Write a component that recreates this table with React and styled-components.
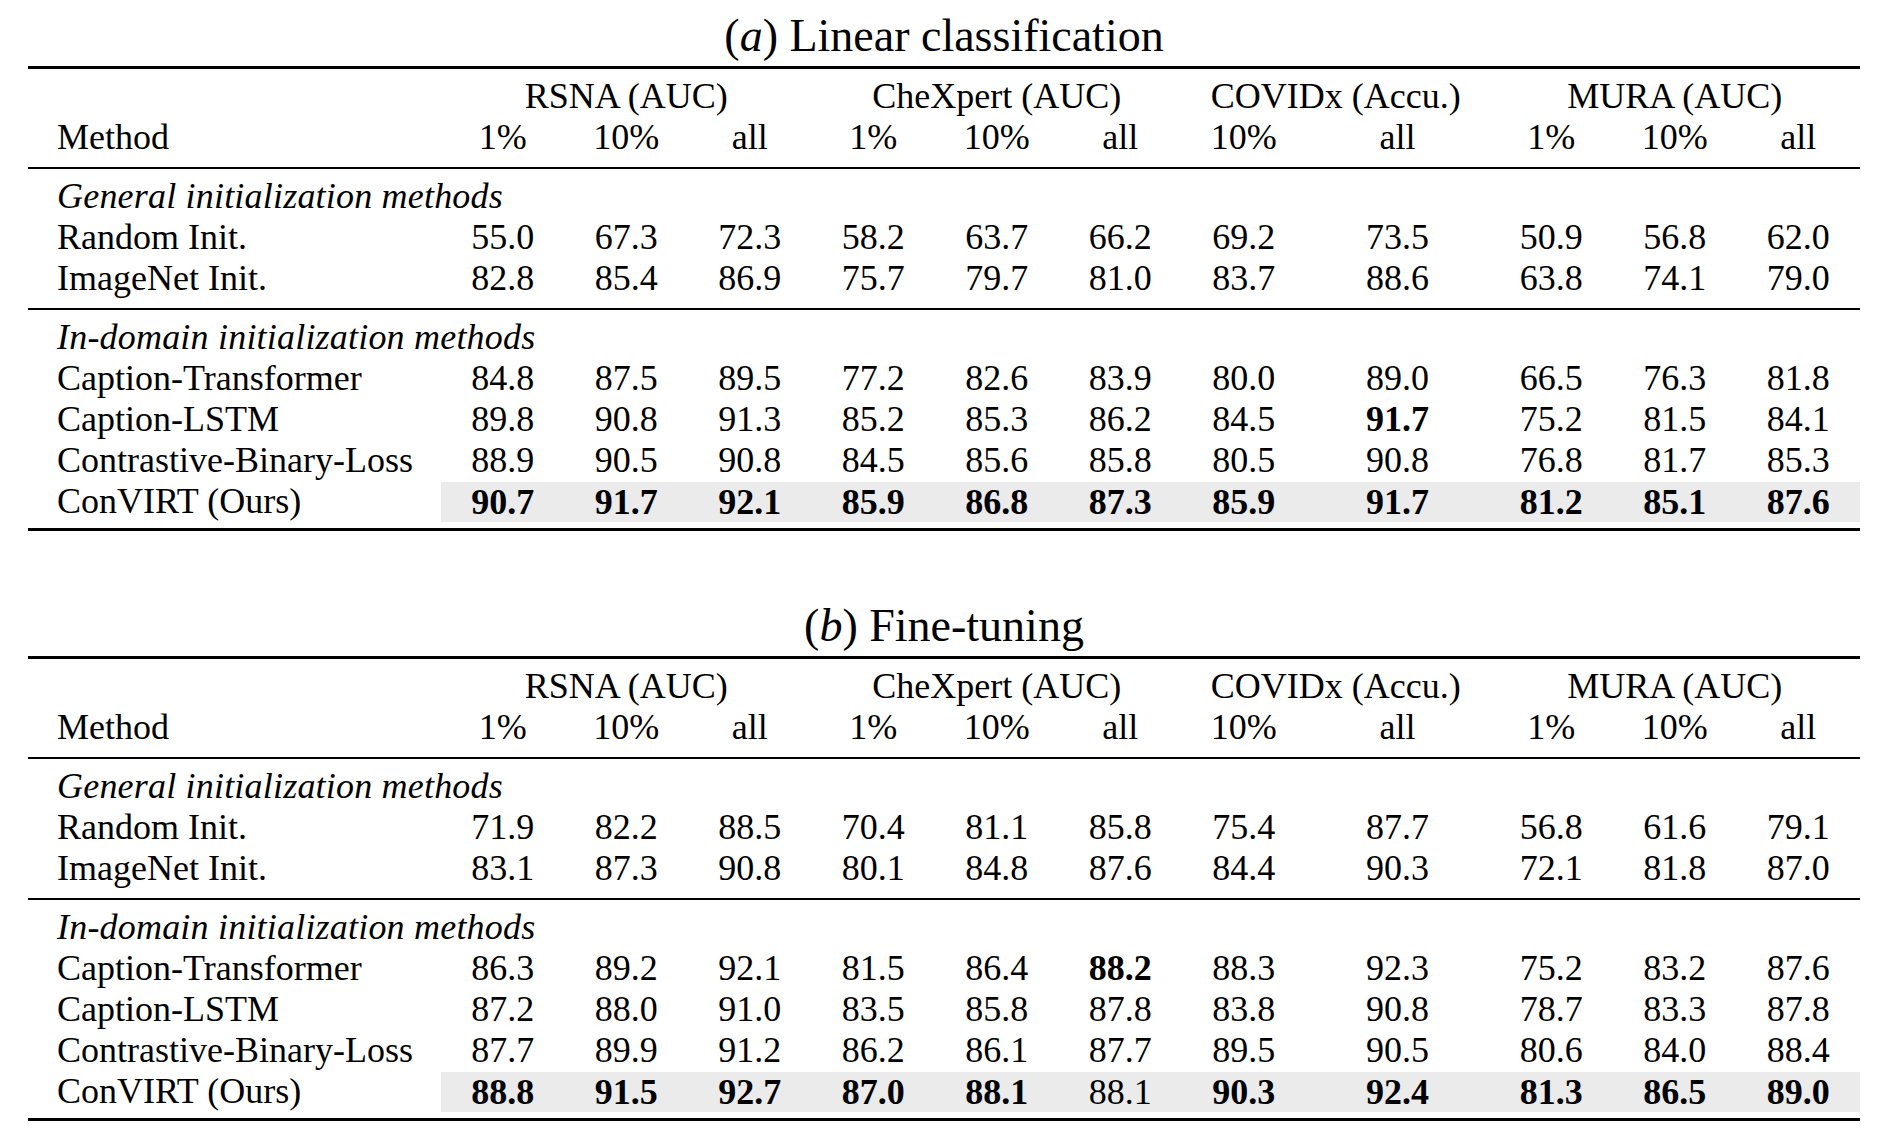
import React from "react";
import styled, { createGlobalStyle } from "styled-components";

const GlobalStyle = createGlobalStyle`
  html, body {
    margin: 0;
    padding: 0;
    background: #ffffff;
  }
  body {
    font-family: "Liberation Serif", "Times New Roman", serif;
    color: #000000;
  }
`;

const COLS = "413px repeat(7, 123.5px) 184px repeat(3, 123.5px)";

const Page = styled.div`
  width: 1832px;
  padding-left: 28px;
  display: flex;
  flex-direction: column;
`;

const Section = styled.section`
  display: flex;
  flex-direction: column;
  & + & {
    margin-top: 59.5px;
  }
`;

const Caption = styled.div`
  text-align: center;
  font-size: 46px;
  line-height: 52px;
  padding: 10px 0 3.5px;
  white-space: nowrap;
`;

const Var = styled.i`
  font-style: italic;
`;

const Table = styled.div`
  display: flex;
  flex-direction: column;
`;

const Rule = styled.div`
  height: ${(p) => p.$weight}px;
  background: #000000;
  margin-top: ${(p) => p.$above || 0}px;
  margin-bottom: ${(p) => p.$below || 0}px;
`;

const Row = styled.div`
  display: grid;
  grid-template-columns: ${COLS};
  height: 41px;
  font-size: 36px;
  line-height: 41px;
`;

const MethodCell = styled.div`
  padding-left: 29px;
  white-space: nowrap;
`;

const GroupLabel = styled.div`
  grid-column: 1 / -1;
  padding-left: 29px;
  font-style: italic;
  letter-spacing: 0.2px;
  white-space: nowrap;
`;

const HeadCell = styled.div`
  text-align: center;
  white-space: nowrap;
`;

const SpanHead = styled.div`
  grid-column: ${(p) => p.$start} / span ${(p) => p.$span};
  text-align: center;
  white-space: nowrap;
`;

const NumCell = styled.div`
  text-align: center;
  white-space: nowrap;
  font-weight: ${(p) => (p.$bold ? 700 : 400)};
  background: ${(p) => (p.$shade ? "#ebebeb" : "transparent")};
  margin: ${(p) => (p.$shade ? "1px 0 0" : "0")};
  line-height: ${(p) => (p.$shade ? "40px" : "41px")};
`;

const groups = [
  { label: "RSNA (AUC)", start: 2, span: 3 },
  { label: "CheXpert (AUC)", start: 5, span: 3 },
  { label: "COVIDx (Accu.)", start: 8, span: 2 },
  { label: "MURA (AUC)", start: 10, span: 3 },
];

const subHeads = ["1%", "10%", "all", "1%", "10%", "all", "10%", "all", "1%", "10%", "all"];

// value strings; a trailing "*" marks bold
const tables = [
  {
    letter: "a",
    title: "Linear classification",
    general: [
      ["Random Init.", "55.0 67.3 72.3 58.2 63.7 66.2 69.2 73.5 50.9 56.8 62.0"],
      ["ImageNet Init.", "82.8 85.4 86.9 75.7 79.7 81.0 83.7 88.6 63.8 74.1 79.0"],
    ],
    domain: [
      ["Caption-Transformer", "84.8 87.5 89.5 77.2 82.6 83.9 80.0 89.0 66.5 76.3 81.8"],
      ["Caption-LSTM", "89.8 90.8 91.3 85.2 85.3 86.2 84.5 91.7* 75.2 81.5 84.1"],
      ["Contrastive-Binary-Loss", "88.9 90.5 90.8 84.5 85.6 85.8 80.5 90.8 76.8 81.7 85.3"],
    ],
    ours: "90.7* 91.7* 92.1* 85.9* 86.8* 87.3* 85.9* 91.7* 81.2* 85.1* 87.6*",
  },
  {
    letter: "b",
    title: "Fine-tuning",
    general: [
      ["Random Init.", "71.9 82.2 88.5 70.4 81.1 85.8 75.4 87.7 56.8 61.6 79.1"],
      ["ImageNet Init.", "83.1 87.3 90.8 80.1 84.8 87.6 84.4 90.3 72.1 81.8 87.0"],
    ],
    domain: [
      ["Caption-Transformer", "86.3 89.2 92.1 81.5 86.4 88.2* 88.3 92.3 75.2 83.2 87.6"],
      ["Caption-LSTM", "87.2 88.0 91.0 83.5 85.8 87.8 83.8 90.8 78.7 83.3 87.8"],
      ["Contrastive-Binary-Loss", "87.7 89.9 91.2 86.2 86.1 87.7 89.5 90.5 80.6 84.0 88.4"],
    ],
    ours: "88.8* 91.5* 92.7* 87.0* 88.1* 88.1 90.3* 92.4* 81.3* 86.5* 89.0*",
  },
];

function DataRow({ name, values, shade }) {
  return (
    <Row>
      <MethodCell>{name}</MethodCell>
      {values.split(" ").map((v, i) => {
        const bold = v.endsWith("*");
        return (
          <NumCell key={i} $bold={bold} $shade={shade}>
            {bold ? v.slice(0, -1) : v}
          </NumCell>
        );
      })}
    </Row>
  );
}

function ResultTable({ t }) {
  return (
    <Section>
      <Caption>
        (<Var>{t.letter}</Var>) {t.title}
      </Caption>
      <Table>
        <Rule $weight={3} $below={7} />
        <Row>
          <div />
          {groups.map((g) => (
            <SpanHead key={g.label} $start={g.start} $span={g.span}>
              {g.label}
            </SpanHead>
          ))}
        </Row>
        <Row>
          <MethodCell>Method</MethodCell>
          {subHeads.map((h, i) => (
            <HeadCell key={i}>{h}</HeadCell>
          ))}
        </Row>
        <Rule $weight={2} $above={9} $below={7} />
        <Row>
          <GroupLabel>General initialization methods</GroupLabel>
        </Row>
        {t.general.map(([n, v]) => (
          <DataRow key={n} name={n} values={v} />
        ))}
        <Rule $weight={2} $above={9} $below={7} />
        <Row>
          <GroupLabel>In-domain initialization methods</GroupLabel>
        </Row>
        {t.domain.map(([n, v]) => (
          <DataRow key={n} name={n} values={v} />
        ))}
        <DataRow name="ConVIRT (Ours)" values={t.ours} shade />
        <Rule $weight={3} $above={6} />
      </Table>
    </Section>
  );
}

export default function App() {
  return (
    <>
      <GlobalStyle />
      <Page>
        {tables.map((t) => (
          <ResultTable key={t.letter} t={t} />
        ))}
      </Page>
    </>
  );
}
